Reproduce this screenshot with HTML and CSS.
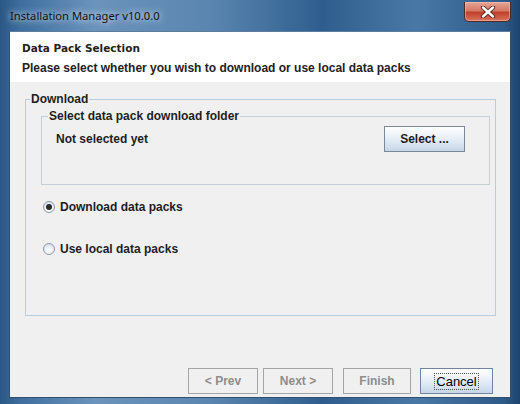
FILE: index.html
```html
<!DOCTYPE html>
<html lang="en">
<head>
    <meta charset="UTF-8">
    <title>Installation Manager v10.0.0</title>
    <link rel="stylesheet" href="styles.css">
</head>
<body>

<div class="window">
    <div class="titlebar">
        <span class="title">Installation Manager v10.0.0</span>
        <div class="close-button">
            <svg width="16" height="12" viewBox="0 0 16 12">
                <path d="M3 1.5 L13 10.5 M13 1.5 L3 10.5" stroke="#4a2018" stroke-width="4.2" stroke-linecap="round"/>
                <path d="M3 1.5 L13 10.5 M13 1.5 L3 10.5" stroke="#ffffff" stroke-width="2.4" stroke-linecap="round"/>
            </svg>
        </div>
    </div>

    <div class="client">
        <div class="header">
            <div class="header-title">Data Pack Selection</div>
            <div class="header-text">Please select whether you wish to download or use local data packs</div>
        </div>

        <div class="content">
            <fieldset class="group">
                <legend>Download</legend>
                <fieldset class="group inner">
                    <legend>Select data pack download folder</legend>
                    <div class="folder-row">
                        <span>Not selected yet</span>
                        <button class="btn">Select ...</button>
                    </div>
                </fieldset>

                <label class="radio-row">
                    <span class="radio checked"></span>
                    Download data packs
                </label>
                <label class="radio-row">
                    <span class="radio"></span>
                    Use local data packs
                </label>
            </fieldset>
        </div>

        <div class="buttons">
            <button class="btn disabled prev">&lt; Prev</button>
            <button class="btn disabled next">Next &gt;</button>
            <button class="btn disabled finish">Finish</button>
            <button class="btn cancel"><span class="focus">Cancel</span></button>
        </div>
    </div>
</div>

</body>
</html>
```

FILE: styles.css
```css
body {
    margin: 0;
    font-family: "Liberation Sans", Arial, sans-serif;
    font-size: 12px;
    color: #1e1e1e;
}
.window {
    width: 520px;
    height: 404px;
    box-sizing: border-box;
    padding: 0 9px 6px 9px;
    display: flex;
    flex-direction: column;
    background: linear-gradient(to right, #2a5684 0%, #3f6f9f 4%, #6b93bb 18%, #5b86b0 40%, #2f5e8e 62%, #4a78a6 80%, #2d5a88 97%, #1f436b 100%);
}
.titlebar {
    height: 31px;
    position: relative;
    flex-shrink: 0;
}
.title {
    position: absolute;
    left: 1px;
    top: 8px;
    font-family: "Noto Sans", sans-serif;
    font-size: 11.2px;
    color: #111;
    text-shadow: 0 0 6px rgba(220, 235, 250, 0.9), 0 0 10px rgba(220, 235, 250, 0.7);
}
.close-button {
    position: absolute;
    right: 0;
    top: 2px;
    width: 45px;
    height: 19px;
    border: 1px solid #4a2a24;
    border-top: none;
    border-radius: 0 0 5px 5px;
    background: linear-gradient(to bottom, #e6a596 0%, #d47a66 45%, #c0412a 55%, #d8735c 100%);
    display: flex;
    align-items: center;
    justify-content: center;
    box-shadow: inset 0 0 0 1px rgba(255, 200, 190, 0.5);
}
.client {
    flex: 1;
    background: #f0f0f0;
    display: flex;
    flex-direction: column;
    border: 1px solid #324f70;
    border-top-color: #5d7d9c;
}
.header {
    background: #fff;
    height: 50px;
    padding: 10px 0 0 12px;
    box-sizing: border-box;
}
.header-title {
    font-family: "DejaVu Sans", Tahoma, sans-serif;
    font-size: 10.5px;
    font-weight: bold;
    color: #222;
}
.header-text {
    font-weight: bold;
    font-size: 12px;
    margin-top: 7px;
    color: #222;
}
.content {
    flex: 1;
    padding: 10px 14px 0 15px;
}
.group {
    margin: 0;
    border: 1px solid #b9cde0;
    padding: 0 5px 0 15px;
    height: 224px;
    box-sizing: border-box;
}
.group legend {
    font-weight: bold;
    padding: 0 1px;
    margin-left: -11px;
    line-height: 15px;
}
.group.inner {
    height: 76px;
    padding: 0 24px 0 14px;
    border-color: #c4cfda;
    margin-top: 2px;
}
.group.inner legend {
    margin-left: -8px;
}
.folder-row {
    display: flex;
    align-items: center;
    justify-content: space-between;
    height: 26px;
    margin-top: 2px;
    font-weight: bold;
}
.btn {
    font-family: "Liberation Sans", Arial, sans-serif;
    font-size: 12px;
    font-weight: bold;
    color: #1e1e1e;
    height: 26px;
    padding: 0;
    border: 1px solid #7a8899;
    background: linear-gradient(to bottom, #ffffff 0%, #eef3f9 35%, #d9e5f1 70%, #c6d6e8 100%);
}
.folder-row .btn {
    width: 81px;
}
.radio-row {
    display: flex;
    align-items: center;
    gap: 5px;
    font-weight: bold;
    margin-left: 2px;
    height: 16px;
    margin-top: 14px;
}
.radio-row + .radio-row {
    margin-top: 26px;
}
.radio {
    width: 10px;
    height: 10px;
    border-radius: 50%;
    border: 1px solid #8e9aa8;
    background: radial-gradient(circle at 50% 70%, #ffffff 0%, #e6ebf1 60%, #c9d2dc 100%);
    position: relative;
}
.radio.checked::after {
    content: "";
    position: absolute;
    left: 2px;
    top: 2px;
    width: 6px;
    height: 6px;
    border-radius: 50%;
    background: #2a2a2a;
}
.buttons {
    display: flex;
    justify-content: flex-end;
    align-items: flex-end;
    padding: 0 17px 3px 0;
    height: 30px;
}
.btn.disabled {
    color: #8d8d8d;
    border-color: #a5a5a5;
    background: #f0f0f0;
}
.prev, .next {
    width: 70px;
}
.next {
    margin-left: 5px;
}
.finish {
    width: 68px;
    margin-left: 10px;
}
.cancel {
    width: 73px;
    margin-left: 9px;
    border-color: #6f85a0;
    color: #000;
    font-size: 13px;
    font-weight: normal;
}
.focus {
    outline: 1px dotted #555;
    padding: 0 1px;
}
```
